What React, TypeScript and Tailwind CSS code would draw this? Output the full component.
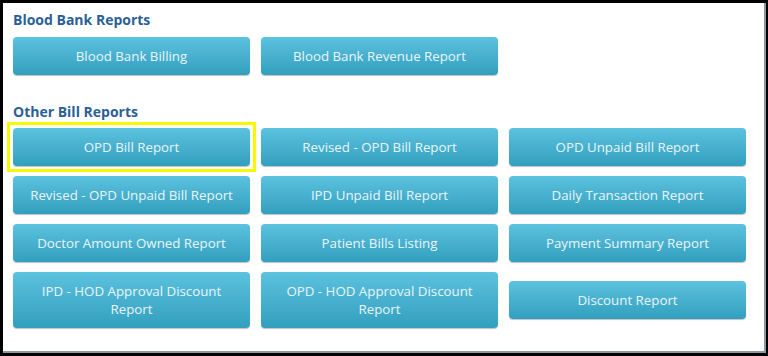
const bloodBank = ["Blood Bank Billing", "Blood Bank Revenue Report"];

const otherBills = [
  "OPD Bill Report",
  "Revised - OPD Bill Report",
  "OPD Unpaid Bill Report",
  "Revised - OPD Unpaid Bill Report",
  "IPD Unpaid Bill Report",
  "Daily Transaction Report",
  "Doctor Amount Owned Report",
  "Patient Bills Listing",
  "Payment Summary Report",
  "IPD - HOD Approval Discount Report",
  "OPD - HOD Approval Discount Report",
  "Discount Report",
];

function ReportButton({ label, highlighted }: { label: string; highlighted?: boolean }) {
  return (
    <div className="relative">
      <button
        type="button"
        className="w-full rounded-[4px] bg-gradient-to-b from-[#5bc2df] to-[#329fbe] px-3 py-[10px] text-center text-[13.3px] leading-[18px] text-[#eaf5f9] shadow-[0_1px_1px_rgba(0,0,0,0.25)]"
      >
        {label}
      </button>
      {highlighted ? (
        <span className="pointer-events-none absolute -inset-[6px] border-[3px] border-[#f8f800]" />
      ) : null}
    </div>
  );
}

export default function App() {
  return (
    <div className="h-[356px] w-[768px] bg-black pl-[3px] pt-[3px] pr-[2px] pb-[3px] font-['Open_Sans',sans-serif]">
      <div className="h-full w-full border-b-2 border-r-2 border-[#8b99a3] bg-white">
        <div className="px-[10px] pt-[7px]">
          <h2 className="text-[14px] font-bold leading-[20px] text-[#2b5f98]">Blood Bank Reports</h2>
          <div className="mt-[7px] grid grid-cols-[237px_237px_237px] gap-x-[11px]">
            {bloodBank.map((label) => (
              <ReportButton key={label} label={label} />
            ))}
          </div>

          <h2 className="mt-[27px] text-[14px] font-bold leading-[20px] text-[#2b5f98]">Other Bill Reports</h2>
          <div className="mt-[6px] grid grid-cols-[237px_237px_237px] items-center gap-x-[11px] gap-y-[10px]">
            {otherBills.map((label, i) => (
              <ReportButton key={label} label={label} highlighted={i === 0} />
            ))}
          </div>
        </div>
      </div>
    </div>
  );
}
